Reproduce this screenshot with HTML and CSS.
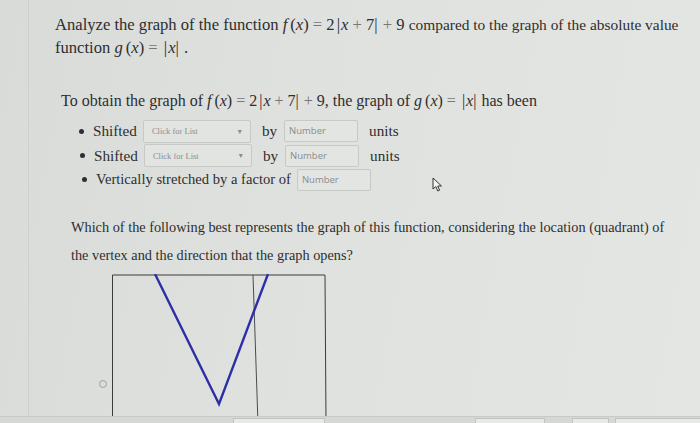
FILE: index.html
```html
<!DOCTYPE html>
<html>
<head>
<meta charset="utf-8">
<link rel="stylesheet" href="styles.css">
</head>
<body>
<div class="page">
  <p class="intro">Analyze the graph of the function <span class="m"><i>f</i><span class="pa">(<i>x</i>)</span> <span class="op">=</span> 2<span class="ab">|<i>x</i> <span class="op">+</span> 7|</span> <span class="op">+</span> 9</span> <span class="tail">compared to the graph of the absolute value</span><br>function <span class="m"><i>g</i><span class="pa">(<i>x</i>)</span> <span class="op">=</span> <span class="ab">|<i>x</i>|</span></span><span class="dot">.</span></p>

  <p class="lead">To obtain the graph of <span class="m"><i>f</i><span class="pa">(<i>x</i>)</span> <span class="op">=</span> 2<span class="ab">|<i>x</i> <span class="op">+</span> 7|</span> <span class="op">+</span> 9</span>, the graph of <span class="m"><i>g</i><span class="pa">(<i>x</i>)</span> <span class="op">=</span> <span class="ab">|<i>x</i>|</span></span> has been</p>

  <ul class="steps">
    <li class="step r1">
      <span class="lbl">Shifted</span>
      <span class="select"><span class="ph">Click for List</span><span class="caret">&#9662;</span></span>
      <span class="by">by</span>
      <span class="num">Number</span>
      <span class="units">units</span>
    </li>
    <li class="step r2">
      <span class="lbl">Shifted</span>
      <span class="select"><span class="ph">Click for List</span><span class="caret">&#9662;</span></span>
      <span class="by">by</span>
      <span class="num">Number</span>
      <span class="units">units</span>
    </li>
    <li class="step r3">
      <span class="lbl">Vertically stretched by a factor of</span>
      <span class="num">Number</span>
    </li>
  </ul>

  <p class="question">Which of the following best represents the graph of this function, considering the location (quadrant) of the vertex and the direction that the graph opens?</p>

  <div class="option">
    <span class="radio"></span>
    <svg class="graph" width="216" height="150" viewBox="0 0 216 150">
      <polyline points="0.5,150 0.5,1 213,1 214,150" fill="none" stroke="#3b3d3d" stroke-width="1"/>
      <line x1="141" y1="1" x2="146" y2="150" stroke="#4a4c4c" stroke-width="1"/>
      <polyline points="43,0 107,130 156,0" fill="none" stroke="#2d2fa6" stroke-width="2.4" stroke-linejoin="miter"/>
    </svg>
  </div>
</div>
<div class="bottombar">
  <span class="tab t1"></span><span class="tab t2"></span><span class="tab t3"></span><span class="tab t4"></span>
</div>
<svg class="cursor" width="12" height="16" viewBox="0 0 12 16">
  <path d="M1 1 L1 12 L3.8 9.6 L5.8 14 L7.6 13.2 L5.7 9 L9.5 9 Z" fill="#f4f4f4" stroke="#333" stroke-width="1"/>
</svg>
</body>
</html>
```

FILE: styles.css
```css
html, body {
  margin: 0;
  padding: 0;
}
body {
  width: 700px;
  height: 423px;
  overflow: hidden;
  position: relative;
  background: linear-gradient(100deg, #d9dbd9 0%, #dfe1df 40%, #e4e6e4 100%);
  font-family: "Liberation Serif", "Times New Roman", serif;
  color: #2e2e2e;
}
.page {
  margin-left: 28px;
  border-left: 1px solid #cfd1cf;
  height: 423px;
  padding-top: 1px;
}
p { margin: 0; }
.m i { font-style: italic; }
.pa { margin-left: 3px; }
.ab { margin-left: 2px; margin-right: 1px; }
.ab i { margin-left: 1px; }
.dot { margin-left: 4px; }
.op { color: #777; }
.intro {
  margin-top: 12px;
  margin-left: 26px;
  white-space: nowrap;
  font-size: 16.6px;
  line-height: 23px;
}
.tail { font-size: 15.4px; }
.lead {
  margin-top: 32px;
  margin-left: 32px;
  font-size: 16px;
  line-height: 20px;
}
.steps {
  list-style: none;
  margin: 8px 0 0 0;
  padding: 0 0 0 50px;
  font-size: 15.2px;
}
.step {
  display: flex;
  align-items: center;
  height: 24.5px;
  position: relative;
}
.step::before {
  content: "";
  width: 5px;
  height: 5px;
  border-radius: 50%;
  background: #2e2e2e;
  margin-right: 9px;
}
.r2 { margin-left: 1px; }
.r3 { margin-left: 3px; height: 23px; font-size: 14.6px; }
.select {
  display: flex;
  align-items: center;
  justify-content: space-between;
  box-sizing: border-box;
  width: 108px;
  height: 23px;
  margin-left: 6px;
  padding: 0 8px 0 8px;
  border: 1px solid #c6c9c6;
  border-radius: 2px;
  background: #e2e4e2;
}
.ph {
  font-family: "Liberation Serif", serif;
  font-size: 8.5px;
  color: #8a8c8c;
}
.caret {
  font-family: "DejaVu Sans", sans-serif;
  font-size: 8px;
  color: #8a8c8c;
}
.by { margin-left: 11px; }
.num {
  box-sizing: border-box;
  width: 74px;
  height: 22px;
  margin-left: 7px;
  padding-left: 4px;
  border: 1px solid #c6c9c6;
  border-radius: 2px;
  background: #e3e5e3;
  font-family: "Open Sans", "Liberation Sans", sans-serif;
  font-size: 9.5px;
  line-height: 20px;
  color: #8a8c8c;
}
.r3 .num { margin-left: 6px; }
.units { margin-left: 11px; }
.question {
  margin-top: 22px;
  margin-left: 42px;
  width: 604px;
  font-size: 14.3px;
  line-height: 28px;
}
.option {
  display: flex;
  align-items: flex-start;
  margin-top: 5px;
  margin-left: 70px;
}
.radio {
  width: 6px;
  height: 6px;
  border: 1.5px solid #a0a2a2;
  border-radius: 50%;
  margin-top: 106px;
}
.graph {
  display: block;
  margin-left: 5px;
}
.bottombar {
  position: absolute;
  left: 0;
  right: 0;
  bottom: 0;
  height: 6px;
  border-top: 1px solid #c8cac8;
  background: #d6d8d6;
}
.tab {
  position: absolute;
  top: 1px;
  height: 6px;
  border: 1px solid #c2c4c2;
  background: #e8eae8;
}
.t1 { left: 233px; width: 90px; }
.t2 { left: 475px; width: 68px; }
.t3 { left: 572px; width: 35px; }
.t4 { left: 615px; width: 85px; }
.cursor {
  position: absolute;
  left: 432px;
  top: 177px;
}
```
